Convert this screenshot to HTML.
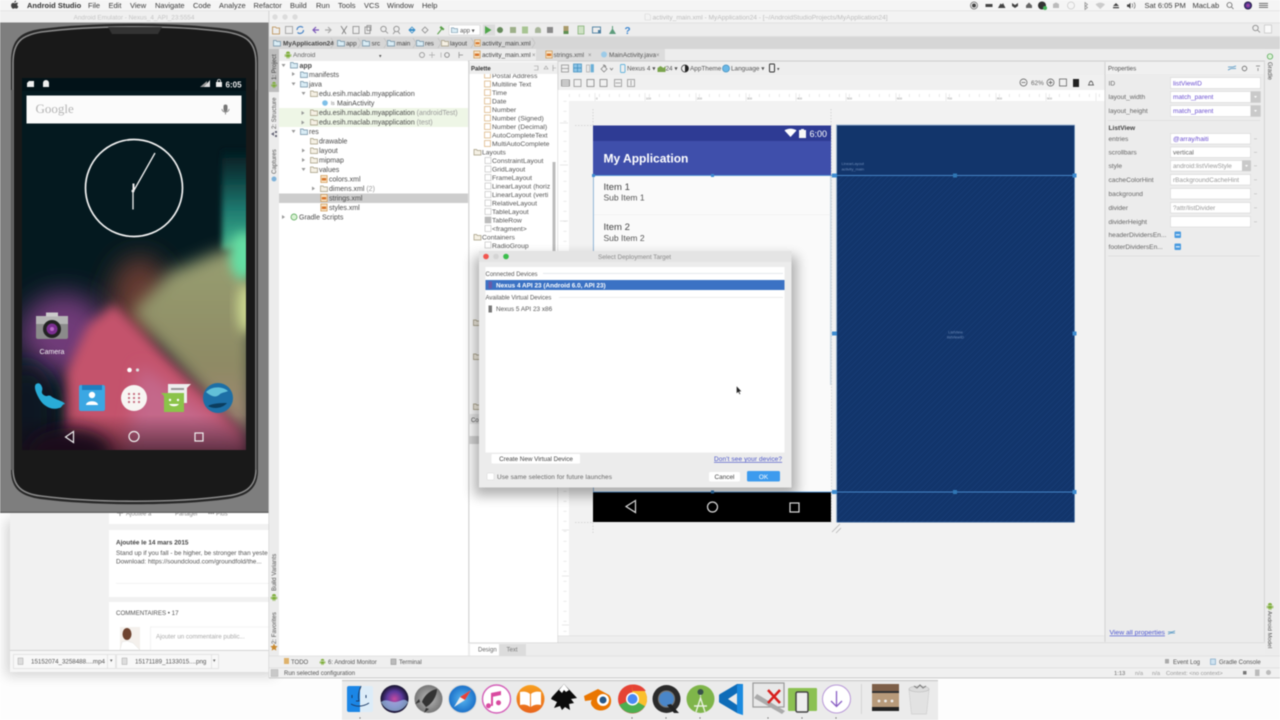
<!DOCTYPE html>
<html><head><meta charset="utf-8"><title>Android Studio</title>
<style>
html,body{margin:0;padding:0;width:1280px;height:720px;overflow:hidden;background:#fff}
svg{display:block;position:absolute;left:0;top:0;filter:blur(.4px)}
text{font-family:"Liberation Sans",sans-serif;font-size:7px;fill:#444}
.t{font-size:7px;fill:#4a4a4a}
.m{font-size:7.5px;fill:#3a3a3a}
.p{font-size:6.8px;fill:#555}
.l{font-size:6.6px;fill:#666}
.v{font-size:6.6px;fill:#6a4fd0}
.g{font-size:6.4px;fill:#999}
.r{font-size:6px;fill:#666}
.u{font-size:3px;fill:#888}
</style></head><body>
<svg width="1280" height="720" viewBox="0 0 1280 720" xmlns="http://www.w3.org/2000/svg">
<defs>
<symbol id="f" viewBox="0 0 8 7" overflow="visible"><path d="M.5 1h2.6l.7 1h3.7v4.5H.5z" fill="#f5f0e4" stroke="#a39a80" stroke-width=".7"/></symbol>
<symbol id="fb" viewBox="0 0 8 7" overflow="visible"><path d="M.5 1h2.6l.7 1h3.7v4.5H.5z" fill="#d9ecf5" stroke="#6f8ea3" stroke-width=".7"/></symbol>
<symbol id="x" viewBox="0 0 8 8" overflow="visible"><rect x=".8" y=".5" width="6.4" height="7" fill="#f6e3c6" stroke="#c98a3c" stroke-width=".6"/><rect x="1.8" y="3" width="4.4" height="2.5" fill="#d9762a"/></symbol>
<symbol id="b" viewBox="0 0 8 8" overflow="visible"><rect x=".6" y=".6" width="6.8" height="6.8" fill="#fff" stroke="#d3a465" stroke-width=".7"/></symbol>
<symbol id="a" viewBox="0 0 8 8" overflow="visible"><path d="M2 3a2 2 0 0 1 4 0v.2H2zM2 3.8h4v2.7H2zM.8 3.8h.8v2.4H.8zM6.4 3.8h.8v2.4h-.8zM2.8 6.5h.8V8h-.8zM4.4 6.5h.8V8h-.8z" fill="#7fae3c"/></symbol>
<pattern id="hatch" width="4" height="4" patternUnits="userSpaceOnUse" patternTransform="rotate(45)"><rect width="4" height="4" fill="#12356b"/><rect width="1" height="4" fill="#163b73"/></pattern>
<linearGradient id="teal" x1="0" y1="0" x2="0" y2="1"><stop offset="0" stop-color="#04191f"/><stop offset=".25" stop-color="#0c3d3e"/><stop offset=".6" stop-color="#1f7a70"/><stop offset="1" stop-color="#3fb58e"/></linearGradient>
<linearGradient id="olive" x1="0" y1="0" x2="0" y2="1"><stop offset="0" stop-color="#98a072"/><stop offset=".6" stop-color="#8e8a64"/><stop offset="1" stop-color="#a8867a"/></linearGradient>
<linearGradient id="vig" x1="0" y1="0" x2="0" y2="1"><stop offset="0" stop-color="#1a0a14" stop-opacity="0"/><stop offset="1" stop-color="#1a0a14" stop-opacity=".6"/></linearGradient>
<linearGradient id="dockfinder" x1="0" y1="0" x2="1" y2="0"><stop offset=".5" stop-color="#1b86e6"/><stop offset=".5" stop-color="#dcecf8"/></linearGradient>
<radialGradient id="siri"><stop offset="0" stop-color="#c64aa0"/><stop offset=".55" stop-color="#5a3a9c"/><stop offset="1" stop-color="#14122a"/></radialGradient>
<radialGradient id="gray"><stop offset="0" stop-color="#bbb"/><stop offset="1" stop-color="#777"/></radialGradient>
<radialGradient id="safari"><stop offset="0" stop-color="#58b6f0"/><stop offset="1" stop-color="#1a6fc8"/></radialGradient>
<linearGradient id="orange" x1="0" y1="0" x2="0" y2="1"><stop offset="0" stop-color="#f8a020"/><stop offset="1" stop-color="#e8641c"/></linearGradient>
<filter id="b12" x="-80%" y="-80%" width="260%" height="260%"><feGaussianBlur stdDeviation="13"/></filter>
<filter id="b8" x="-50%" y="-50%" width="200%" height="200%"><feGaussianBlur stdDeviation="8"/></filter>
<filter id="b5" x="-40%" y="-40%" width="180%" height="180%"><feGaussianBlur stdDeviation="5.5"/></filter>
<filter id="b4" x="-40%" y="-40%" width="180%" height="180%"><feGaussianBlur stdDeviation="4"/></filter>
<filter id="b2" x="-30%" y="-30%" width="160%" height="160%"><feGaussianBlur stdDeviation="3"/></filter>
<filter id="sh" x="-10%" y="-10%" width="120%" height="125%"><feGaussianBlur stdDeviation="6"/></filter>
<clipPath id="scr"><rect x="22" y="78" width="224" height="372"/></clipPath>
<clipPath id="pal"><rect x="469" y="74" width="88" height="570"/></clipPath>
</defs>

<!-- desktop -->
<rect width="1280" height="720" fill="#fdfdfd"/>

<!-- browser behind -->
<rect x="6" y="520" width="270" height="156" fill="#000" opacity=".16" filter="url(#sh)"/>
<rect x="10" y="505" width="262" height="167" fill="#f1f1f1"/>
<rect x="109" y="505" width="162" height="19" fill="#fff"/>
<rect x="109" y="530" width="162" height="67" fill="#fff"/>
<rect x="109" y="602" width="162" height="50" fill="#fff"/>
<rect x="116" y="583" width="155" height=".7" fill="#eee"/>
<path d="M120 510v6M117 513h6" stroke="#999" stroke-width="1"/>
<text x="126" y="515.5" style="font-size:6px;fill:#888">Ajoutée à</text>
<text x="175" y="515.5" style="font-size:6px;fill:#888">Partager</text>
<text x="208" y="515.5" style="font-size:6px;fill:#888">••• Plus</text>
<text x="116" y="544.5" style="font-size:6.4px;fill:#444;font-weight:bold">Ajoutée le 14 mars 2015</text>
<text x="116" y="555" style="font-size:6.4px;fill:#555">Stand up if you fall - be higher, be stronger than yeste</text>
<text x="116" y="563.5" style="font-size:6.4px;fill:#555">Download: https://soundcloud.com/groundfold/the...</text>
<text x="116" y="615" style="font-size:6.2px;fill:#555">COMMENTAIRES • 17</text>
<rect x="120" y="627" width="20" height="23" fill="#f4f0ec"/>
<ellipse cx="127" cy="634" rx="4.5" ry="6" fill="#6e4330"/>
<path d="M120 650l2-8 5-1 6 2 7 7z" fill="#fff" stroke="#ddd" stroke-width=".4"/>
<rect x="150.500" y="627" width="121" height="24" fill="#fff" stroke="#eee" stroke-width=".7"/>
<text x="156" y="638.500" style="font-size:6.2px;fill:#aaa">Ajouter un commentaire public...</text>
<rect x="10" y="650" width="260" height="22" fill="#f6f6f6"/>
<rect x="10" y="650" width="260" height=".8" fill="#ccc"/>
<rect x="13.500" y="654.500" width="102" height="14" fill="#f8f8f8" stroke="#ddd" stroke-width=".7"/>
<rect x="116.500" y="654.500" width="102" height="14" fill="#f8f8f8" stroke="#ddd" stroke-width=".7"/>
<rect x="18" y="658" width="5" height="6.500" fill="#ddd" stroke="#999" stroke-width=".4"/>
<rect x="122" y="658" width="5" height="6.500" fill="#ddd" stroke="#999" stroke-width=".4"/>
<text x="31" y="663.500" style="font-size:6.2px;fill:#555">15152074_3258488....mp4</text>
<text x="135" y="663.500" style="font-size:6.2px;fill:#555">15171189_1133015....png</text>
<path d="M107.500 654.500v14M211.500 654.500v14" stroke="#ddd" stroke-width=".7"/>
<text x="110" y="662" style="font-size:5px;fill:#666">▾</text><text x="213" y="662" style="font-size:5px;fill:#666">▾</text>

<!-- menu bar -->
<rect width="1280" height="11" fill="#f5f5f5"/>
<rect y="10.500" width="1280" height=".8" fill="#d8d8d8"/>
<path d="M17 3.200c-1-.1-1.500.6-2 .6s-1-.6-1.900-.5c-1.300.1-2.100 1.300-2 2.800.1 1.300 1.100 3 2 3 .6 0 .9-.4 1.700-.4s1.200.4 1.800.3c.8-.1 1.400-1.100 1.700-2.100-1.500-.8-1.400-2.800.0-3.500M15.200 2.900c.6-.6.900-1.300.8-2-.8.1-1.600.8-1.800 2z" fill="#444" transform="translate(0,-.4)"/>
<text x="27" y="8" class="m" style="font-weight:bold;fill:#333">Android Studio</text>
<text x="88" y="8" class="m">File</text><text x="108.500" y="8" class="m">Edit</text><text x="130" y="8" class="m">View</text><text x="155" y="8" class="m">Navigate</text><text x="193" y="8" class="m">Code</text><text x="219" y="8" class="m">Analyze</text><text x="253.500" y="8" class="m">Refactor</text><text x="290" y="8" class="m">Build</text><text x="316" y="8" class="m">Run</text><text x="338" y="8" class="m">Tools</text><text x="364" y="8" class="m">VCS</text><text x="387" y="8" class="m">Window</text><text x="422" y="8" class="m">Help</text>
<g fill="#444">
<circle cx="974" cy="5.500" r="3.500" fill="none" stroke="#666" stroke-width=".8"/><circle cx="974" cy="5.500" r="2"/>
<rect x="985.500" y="4" width="7" height="3"/>
<path d="M998 8l2.500-4.500 1.500 1 1-1.500 2.500 5z"/>
<path d="M1012 3l3 2 3-2 0 3-3 2-3-2z"/>
<path d="M1026 8v-2.500l3-3 3 3v2.500z" fill="#666"/>
<circle cx="1042" cy="5.500" r="4" fill="#333"/><circle cx="1045" cy="8" r="2" fill="#45b35a"/>
<path d="M1053 8v-4l3-1.500 3 1.500v4z" fill="#bbb"/>
<circle cx="1071" cy="5.500" r="3.500" fill="none" stroke="#ccc" stroke-width=".8"/>
<path d="M1085 2.500l2.500 2-2 1.500 2 1.500-2.500 2z" fill="none" stroke="#888" stroke-width=".7"/>
<path d="M1095.500 4.500c3-2.500 6.500-2.500 9.500 0l-4.700 4.500z" fill="#ccc"/>
<path d="M1113 6l3-3 3 3zM1113 7h6v1.200h-6z"/>
<path d="M1127 4.500h1.500l2-1.800v6l-2-1.800h-1.500z"/><path d="M1132 3.500c1 1 1 3 0 4M1134 2.500c1.500 1.500 1.500 4.500 0 6" fill="none" stroke="#555" stroke-width=".6"/>
<circle cx="1229.500" cy="5" r="2.500" fill="none" stroke="#666" stroke-width=".8"/><path d="M1231.500 7l2 2" stroke="#666" stroke-width=".8"/>
<circle cx="1248" cy="5.500" r="4" fill="url(#siri)"/>
<path d="M1259 3h9v.8h-9zM1259 5h9v.8h-9zM1259 7h9v.8h-9z"/>
</g>
<text x="1144.500" y="8" class="m">Sat 6:05 PM</text><text x="1192.500" y="8" class="m">MacLab</text>

<!-- emulator -->
<rect y="11" width="269" height="11.500" fill="#f0f0f0"/>
<text x="134" y="19.500" text-anchor="middle" style="font-size:6.4px;fill:#c4c4c4">Android Emulator - Nexus_4_API_23:5554</text>
<rect y="22.500" width="269" height="490.500" fill="#7e7e7e"/>
<rect x="0" y="511.500" width="269" height="1.500" fill="#666"/>
<!-- phone -->
<path d="M11 62C11 38 22 32 40 29 95 22 175 22 228 29 246 32 258 38 258 62V470C258 490 246 496 228 499 175 506 95 506 40 499 22 496 11 490 11 470Z" fill="#262626"/>
<path d="M13 63C13 40 24 35 41 32 95 25 175 25 227 32 244 35 256 40 256 63V469C256 488 244 494 227 496 175 503 95 503 41 496 24 494 13 488 13 469Z" fill="#191919" stroke="#8a8a8a" stroke-width="1.600"/>
<path d="M12 470v-380" stroke="#5a5a5a" stroke-width="2"/><path d="M257 470v-380" stroke="#3a3a3a" stroke-width="1.500"/>
<path d="M108 27h54l-4 7h-46z" fill="#333"/>
<!-- screen -->
<g clip-path="url(#scr)">
<rect x="22" y="78" width="224" height="372" fill="#04191f"/>
<rect x="222" y="150" width="40" height="100" fill="url(#teal)" filter="url(#b2)"/>
<ellipse cx="140" cy="300" rx="30" ry="44" fill="#663a32" filter="url(#b12)"/>
<path d="M132 312L170 272 218 252 252 244V445L232 425 155 340Z" fill="url(#olive)" filter="url(#b8)"/>
<ellipse cx="243" cy="256" rx="13" ry="24" fill="#64e0a4" filter="url(#b5)"/>
<ellipse cx="246" cy="308" rx="9" ry="26" fill="#cdd990" filter="url(#b5)"/>
<ellipse cx="64" cy="335" rx="44" ry="42" fill="#6f3a78" filter="url(#b12)"/>
<path d="M114 304L240 430 246 462H62L66 372 88 325Z" fill="#c4526c" filter="url(#b5)"/>
<path d="M140 365L246 440V460H125Z" fill="#c4688a" filter="url(#b8)"/>
<ellipse cx="26" cy="415" rx="30" ry="52" fill="#0a1620" filter="url(#b12)"/>
<ellipse cx="70" cy="452" rx="42" ry="24" fill="#1e0f20" filter="url(#b8)"/>
<rect x="22" y="415" width="224" height="37" fill="url(#vig)"/>
<rect x="22" y="78" width="224" height="13" fill="#021015" opacity=".7"/>
</g>
<path d="M29 81h5v6h-7v-4z" fill="#eee"/><path d="M43 83a3 3 0 0 1 6 0v4h-6z" fill="#eee"/>
<path d="M200 87l7-6v6z" fill="#999"/><path d="M204 87l6-7v7z" fill="#ddd"/><rect x="216" y="82" width="6" height="5" fill="#eee"/><path d="M217.500 82v-1a1.500 1.500 0 0 1 3 0v1" fill="none" stroke="#eee" stroke-width=".8"/>
<text x="225.500" y="87.500" style="font-size:8px;fill:#eee;font-weight:bold">6:05</text>
<rect x="26.500" y="95.500" width="215" height="28" fill="#fbfbfb"/>
<text x="35.500" y="113" style="font-family:'Liberation Serif',serif;font-size:13px;fill:#b5b5b5">Google</text>
<rect x="223.500" y="104.500" width="4" height="7" rx="2" fill="#777"/><path d="M222 109c0 4 7 4 7 0M225.500 112v2.500" fill="none" stroke="#777" stroke-width=".8"/>
<circle cx="134" cy="188" r="48.500" fill="none" stroke="#f2f2f2" stroke-width="1.700"/>
<path d="M133 192L155 153M133 192L133 209.500" stroke="#f2f2f2" stroke-width="1.300" fill="none"/><circle cx="133" cy="191" r="1.500" fill="#eee"/><rect x="132.500" y="183.500" width="2" height="8" fill="#eee"/>
<!-- camera -->
<rect x="36" y="316" width="32" height="23" rx="2" fill="#8b8b8b"/><rect x="36" y="316" width="32" height="8" fill="#b5b5b5"/><rect x="46" y="312.500" width="12" height="4" fill="#ccc"/>
<circle cx="52" cy="329" r="9" fill="#222"/><circle cx="52" cy="329" r="5.500" fill="#7a2e8f"/><circle cx="52" cy="329" r="2" fill="#b769c6"/>
<text x="52" y="354" text-anchor="middle" style="font-size:7px;fill:#f3f3f3">Camera</text>
<circle cx="129.500" cy="370" r="2.300" fill="#fff"/><circle cx="137.500" cy="370" r="1.600" fill="#ddd"/>
<!-- dock android -->
<path d="M37 384c3-2 5 0 6 3 1 3-.5 4 0 6 1 2 3 3 5 3 1.500-.5 3-1 5 1 3 2 13 5 13 7-3 0-3 4-6 4-8 3-16-3-19-8-3-5-7-13-4-16z" fill="#29abd6" transform="translate(-1 0)"/>
<rect x="79" y="385" width="26" height="26" rx="2" fill="#3ba7e3"/><rect x="82" y="385" width="20" height="5" fill="#1f7fc0"/><circle cx="92" cy="395" r="3.200" fill="#fff"/><path d="M86 405c0-5 12-5 12 0z" fill="#fff"/>
<circle cx="134" cy="398" r="13" fill="#f7f5f3"/><g fill="#c76b7e"><circle cx="129" cy="394" r="1.100"/><circle cx="134" cy="394" r="1.100"/><circle cx="139" cy="394" r="1.100"/><circle cx="129" cy="398" r="1.100"/><circle cx="134" cy="398" r="1.100"/><circle cx="139" cy="398" r="1.100"/><circle cx="129" cy="402" r="1.100"/><circle cx="134" cy="402" r="1.100"/><circle cx="139" cy="402" r="1.100"/></g>
<path d="M168 384h23l-4 4v15h-19z" fill="#eee"/><rect x="171" y="388" width="13" height="2" fill="#999"/>
<path d="M161 393h23v19h-20v-16z" fill="#8bc34a"/><circle cx="170" cy="400" r="1.200" fill="#fff"/><circle cx="178" cy="400" r="1.200" fill="#fff"/><path d="M169 404c2 3 8 3 10 0z" fill="#fff"/>
<circle cx="218" cy="398" r="15" fill="#1d6fa6"/><path d="M206 392c6-6 16-6 22-1-4 2-6 1-9 4-4 3-8 1-13-3z" fill="#62c0d8"/><path d="M208 406c5 3 14 3 19-3-4 0-14 0-19 3z" fill="#0b3d5e"/>
<path d="M73.500 431.500l-8 5.500 8 5.500z" fill="none" stroke="#eee" stroke-width="1.200"/>
<circle cx="134" cy="436.500" r="5" fill="none" stroke="#eee" stroke-width="1.200"/>
<rect x="195" y="433" width="8" height="8" fill="none" stroke="#eee" stroke-width="1.200"/>

<!-- studio window -->
<rect x="269" y="11" width="1011" height="667" fill="#ededed"/>
<rect x="269" y="11" width="1011" height="12" fill="#f3f3f3"/>
<rect x="268.500" y="11" width=".8" height="667" fill="#ccc"/>
<rect x="269" y="22.500" width="1011" height=".8" fill="#dcdcdc"/>
<circle cx="275" cy="17" r="2.700" fill="#dcdcdc"/><circle cx="285" cy="17" r="2.700" fill="#dcdcdc"/><circle cx="295" cy="17" r="2.700" fill="#dcdcdc"/>
<path d="M645 14h4l1.500 1.500v4.500H645z" fill="none" stroke="#d8d8d8" stroke-width=".6"/>
<text x="652.500" y="19.500" style="font-size:6.6px;fill:#bdbdbd">activity_main.xml - MyApplication24 - [~/AndroidStudioProjects/MyApplication24]</text>
<!-- toolbar -->
<g fill="none" stroke="#8a8a8a" stroke-width=".8">
<path d="M272.500 27h3l1 1h3v6h-7z" stroke="#b88a4c"/>
<rect x="285.500" y="26.500" width="7" height="7" stroke="#999"/>
<path d="M297 30a3.500 3.500 0 0 1 6-2.400M303.500 30a3.500 3.500 0 0 1-6 2.400" stroke="#4c86c6" stroke-width="1.200"/>
<path d="M313 30h6M316 27l3 3-3 3" stroke="#7a56b8" stroke-width="1.200" transform="rotate(180 316 30)"/>
<path d="M325 30h6M328 27l3 3-3 3" stroke="#aaa" stroke-width="1.200"/>
<path d="M341 26l5 8M347 26l-5 8" stroke="#777"/><rect x="353" y="26.500" width="6" height="7"/><rect x="365" y="27" width="5" height="6.500"/><rect x="367" y="25.500" width="4" height="5"/>
<circle cx="383.500" cy="29" r="2.700"/><path d="M385.500 31l2.500 2.500"/><circle cx="396.500" cy="29" r="2.700"/><path d="M393 34l2-2.500M400 34l-2-2.500"/>
<path d="M409 30h6" stroke="#3a8fc9" stroke-width="2"/><path d="M412 27l3 3-3 3-3-3z" stroke="#3a8fc9"/>
<path d="M425 27l3 3-3 3-3-3z" stroke="#8a8a8a"/>
</g>
<path d="M437 34l4-5-1.500-1.500 1.500-1.500 3.500 3-1.500 1.500-1-1-4 5z" fill="#5aa04a"/>
<rect x="449" y="25" width="31" height="10" rx="1" fill="#fff" stroke="#ccc" stroke-width=".6"/>
<use href="#fb" x="451" y="26.500" width="7" height="7"/>
<text x="460" y="32.500" style="font-size:6px;fill:#555">app ▾</text>
<rect x="483" y="24.500" width="12" height="11" fill="#dbdbdb"/>
<path d="M485 26l6.500 4-6.500 4z" fill="#4fa64a"/>
<g>
<circle cx="500" cy="30" r="3" fill="#668a5c"/><rect x="510" y="27" width="6" height="6" fill="#9db089"/><rect x="522" y="26.500" width="6" height="7" fill="#a8c593"/><path d="M535 30a3 3 0 1 1 6 0v3h-6z" fill="#a8b59a"/><rect x="547" y="27" width="6" height="6" fill="#8a8a8a"/>
<rect x="563.500" y="26" width="5" height="8" fill="#a99a6a"/><rect x="563.500" y="31" width="5" height="3" fill="#5e8f52"/>
<rect x="578" y="26" width="6" height="8" fill="#cfe2c4" stroke="#6ba05c" stroke-width=".6"/>
<rect x="592.500" y="27" width="8" height="6" fill="none" stroke="#4c7ea0" stroke-width=".9"/><rect x="598" y="30" width="3" height="3.500" fill="#4c7ea0"/>
<path d="M609 34h7l-3-5v-3h-1v3z" fill="#5d9c7c"/>
</g>
<text x="624.500" y="34" style="font-size:10px;fill:#3c86d0;font-weight:bold">?</text>
<circle cx="1255.500" cy="28" r="2.700" fill="none" stroke="#888" stroke-width=".8"/><path d="M1257.500 30l2.500 2.500" stroke="#888" stroke-width=".8"/>
<rect x="1264.500" y="25" width="7" height="8" fill="#fafafa" stroke="#bbb" stroke-width=".6"/>
<rect x="269" y="36" width="1011" height=".8" fill="#dcdcdc"/>
<!-- breadcrumb -->
<rect x="269" y="37" width="1011" height="12" fill="#d6d6d6"/>
<use href="#fb" x="273" y="39.500" width="8" height="7"/><text x="283" y="45.500" style="font-size:6.400px;fill:#444;font-weight:bold">MyApplication24</text>
<path d="M331 38l3 5-3 5" fill="none" stroke="#bbb" stroke-width=".6"/>
<use href="#fb" x="337" y="39.500" width="8" height="7"/><text x="346" y="45.500" style="font-size:6.400px;fill:#444">app</text>
<use href="#fb" x="362" y="39.500" width="8" height="7"/><text x="371.500" y="45.500" style="font-size:6.400px;fill:#444">src</text>
<use href="#fb" x="387" y="39.500" width="8" height="7"/><text x="396.500" y="45.500" style="font-size:6.400px;fill:#444">main</text>
<use href="#fb" x="416" y="39.500" width="8" height="7"/><text x="425" y="45.500" style="font-size:6.400px;fill:#444">res</text>
<use href="#f" x="441" y="39.500" width="8" height="7"/><text x="450" y="45.500" style="font-size:6.400px;fill:#444">layout</text>
<use href="#x" x="474" y="39.500" width="7" height="7"/><text x="482" y="45.500" style="font-size:6.400px;fill:#444">activity_main.xml</text>
<path d="M532 38l3 5-3 5" fill="none" stroke="#bbb" stroke-width=".6"/>
<g fill="none" stroke="#bbb" stroke-width=".6"><path d="M358 38l3 5-3 5M384 38l3 5-3 5M413 38l3 5-3 5M438 38l3 5-3 5M471 38l3 5-3 5"/></g>
<!-- project header -->
<rect x="279" y="49" width="189" height="12" fill="#ececec"/>
<use href="#a" x="284" y="50.500" width="8" height="8"/>
<text x="293" y="57" style="font-size:6.500px;fill:#666">Android</text>
<text x="379" y="57.500" style="font-size:5px;fill:#555">▾</text>
<g fill="none" stroke="#888" stroke-width=".7"><circle cx="422" cy="55" r="2.500"/><path d="M429 55h6M432 52v6M441 52.500v5" stroke="#aaa"/><circle cx="447" cy="55" r="2.300" stroke="#666"/><path d="M459 52v6M459 55h4"/></g>
<!-- left strip -->
<rect x="269" y="49" width="10" height="629" fill="#ececec"/>
<rect x="269" y="49" width="10" height="43" fill="#bdbdbd"/>
<g>
<text transform="translate(276,80) rotate(-90)" style="font-size:6.100px;fill:#444">1: Project</text>
<text transform="translate(276,129) rotate(-90)" style="font-size:6.100px;fill:#555">2: Structure</text>
<text transform="translate(276,174) rotate(-90)" style="font-size:6.100px;fill:#555">Captures</text>
<text transform="translate(276,591) rotate(-90)" style="font-size:6.100px;fill:#555">Build Variants</text>
<text transform="translate(276,644) rotate(-90)" style="font-size:6.100px;fill:#555">2: Favorites</text>
</g>
<use href="#a" x="270.500" y="81" width="7" height="7"/>
<path d="M271 134l3-2v4zM275 131h2v2h-2zM275 135h2v2h-2z" fill="#667"/>
<circle cx="274" cy="179" r="2.500" fill="#7fb2d9"/>
<use href="#a" x="270" y="593" width="8" height="8"/>
<path d="M274 643.500l1.100 2.400 2.600.3-1.900 1.800.5 2.600-2.300-1.300-2.300 1.300.5-2.600-1.900-1.800 2.600-.3z" fill="#c98a30"/>
<!-- tree pane -->
<rect x="279" y="61" width="189" height="595" fill="#fff"/>
<rect x="279" y="108" width="189" height="19" fill="#eef6e6"/>
<rect x="279" y="193.500" width="189" height="9.500" fill="#cdcdcd"/>
<g fill="#999">
<path d="M281.500 64l4 0-2 3z"/><path d="M292 72l3 2-3 2z"/><path d="M291.500 82.500l4 0-2 3z"/><path d="M301.500 92l4 0-2 3z"/><path d="M301.500 111l3 2-3 2z"/><path d="M301.500 120.500l3 2-3 2z"/><path d="M291.500 130l4 0-2 3z"/><path d="M302 148.500l3 2-3 2z"/><path d="M302 158l3 2-3 2z"/><path d="M301.500 168l4 0-2 3z"/><path d="M312 186.500l3 2-3 2z"/><path d="M282 215l3 2-3 2z"/>
</g>
<use href="#fb" x="290" y="61.500" width="8" height="7"/>
<use href="#fb" x="300" y="71" width="8" height="7"/><use href="#fb" x="300" y="80.500" width="8" height="7"/>
<use href="#f" x="310" y="90" width="8" height="7"/><use href="#f" x="310" y="109" width="8" height="7"/><use href="#f" x="310" y="118.500" width="8" height="7"/><use href="#fb" x="300" y="128" width="8" height="7"/>
<use href="#f" x="310" y="137.500" width="8" height="7"/><use href="#f" x="310" y="147" width="8" height="7"/><use href="#f" x="310" y="156.500" width="8" height="7"/><use href="#f" x="310" y="166" width="8" height="7"/>
<use href="#x" x="320" y="175" width="8" height="8"/><use href="#f" x="320" y="185" width="8" height="7"/><use href="#x" x="320" y="194" width="8" height="8"/><use href="#x" x="320" y="203.500" width="8" height="8"/>
<circle cx="294" cy="217" r="3" fill="#d9f2d4" stroke="#4aa04a" stroke-width=".7"/>
<circle cx="325" cy="103" r="2.800" fill="#7fc0e8"/><text x="331" y="105" style="font-size:5px;fill:#777">ls</text>
<text x="299.500" y="68" class="t" style="font-weight:bold">app</text>
<text x="309" y="77" class="t">manifests</text>
<text x="309" y="86.500" class="t">java</text>
<text x="319" y="96" class="t">edu.esih.maclab.myapplication</text>
<text x="337" y="105.500" class="t">MainActivity</text>
<text x="319" y="115" class="t">edu.esih.maclab.myapplication <tspan fill="#999">(androidTest)</tspan></text>
<text x="319" y="124.500" class="t">edu.esih.maclab.myapplication <tspan fill="#999">(test)</tspan></text>
<text x="309" y="134" class="t">res</text>
<text x="319" y="143.500" class="t">drawable</text>
<text x="319" y="153" class="t">layout</text>
<text x="319" y="162.500" class="t">mipmap</text>
<text x="319" y="172" class="t">values</text>
<text x="329" y="181.500" class="t">colors.xml</text>
<text x="329" y="191" class="t">dimens.xml <tspan fill="#999">(2)</tspan></text>
<text x="329" y="200.500" class="t">strings.xml</text>
<text x="329" y="210" class="t">styles.xml</text>
<text x="299" y="219.500" class="t">Gradle Scripts</text>

<!-- editor tabs -->
<rect x="468" y="49" width="812" height="12" fill="#ededed"/>
<rect x="468" y="49" width="197" height="12" fill="#dcdcdc"/>
<rect x="468" y="49" width="68" height="12" fill="#ececec"/>
<rect x="468" y="60.500" width="797" height="1.100" fill="#cfcfcf"/>
<use href="#x" x="473" y="50.500" width="8" height="8"/><text x="482" y="57" style="font-size:6.400px;fill:#444">activity_main.xml</text><text x="532" y="57" style="font-size:6px;fill:#888">×</text>
<use href="#x" x="545" y="50.500" width="8" height="8"/><text x="553.500" y="57" style="font-size:6.400px;fill:#555">strings.xml</text><text x="588" y="57" style="font-size:6px;fill:#888">×</text>
<circle cx="604" cy="54.500" r="3" fill="#9ccbe8"/><text x="609" y="57" style="font-size:6.400px;fill:#555">MainActivity.java</text><text x="656" y="57" style="font-size:6px;fill:#888">×</text>

<!-- palette -->
<rect x="468.500" y="61" width="89" height="583" fill="#fff"/>
<rect x="468.500" y="62" width="89" height="12" fill="#eeeeee"/>
<rect x="468.500" y="61" width=".8" height="583" fill="#c8c8c8"/>
<text x="471" y="70.500" style="font-size:6px;fill:#333;font-weight:bold">Palette</text>
<path d="M534 66h4v4h-4M544 69l2-3 2 3zM553 65v6M553 68h3" fill="none" stroke="#999" stroke-width=".6"/>
<g clip-path="url(#pal)">
<use href="#b" x="484" y="71.500" width="7" height="7"/><text x="492" y="78" class="p">Postal Address</text>
<use href="#b" x="484" y="80.500" width="7" height="7"/><text x="492" y="86.500" class="p">Multiline Text</text>
<use href="#b" x="484" y="89" width="7" height="7"/><text x="492" y="95" class="p">Time</text>
<use href="#b" x="484" y="97.500" width="7" height="7"/><text x="492" y="103.500" class="p">Date</text>
<use href="#b" x="484" y="106" width="7" height="7"/><text x="492" y="112" class="p">Number</text>
<use href="#b" x="484" y="114.500" width="7" height="7"/><text x="492" y="120.500" class="p">Number (Signed)</text>
<use href="#b" x="484" y="123" width="7" height="7"/><text x="492" y="129" class="p">Number (Decimal)</text>
<use href="#b" x="484" y="131.500" width="7" height="7"/><text x="492" y="137.500" class="p">AutoCompleteText</text>
<use href="#b" x="484" y="140" width="7" height="7"/><text x="492" y="146" class="p">MultiAutoComplete</text>
<use href="#f" x="473.500" y="148.500" width="8" height="7"/><text x="482" y="154.500" class="p">Layouts</text>
<g fill="#fff" stroke="#bbb" stroke-width=".6"><rect x="485" y="157.500" width="6" height="6"/><rect x="485" y="166" width="6" height="6"/><rect x="485" y="174.500" width="6" height="6"/><rect x="485" y="183" width="6" height="6"/><rect x="485" y="191.500" width="6" height="6"/><rect x="485" y="200" width="6" height="6"/><rect x="485" y="208.500" width="6" height="6"/><rect x="485" y="217" width="6" height="6" fill="#bbb"/><rect x="485" y="225.500" width="6" height="6"/><rect x="485" y="242" width="6" height="6"/></g>
<text x="492" y="163" class="p">ConstraintLayout</text>
<text x="492" y="171.500" class="p">GridLayout</text>
<text x="492" y="180" class="p">FrameLayout</text>
<text x="492" y="188.500" class="p">LinearLayout (horiz</text>
<text x="492" y="197" class="p">LinearLayout (verti</text>
<text x="492" y="205.500" class="p">RelativeLayout</text>
<text x="492" y="214" class="p">TableLayout</text>
<text x="492" y="222.500" class="p">TableRow</text>
<text x="492" y="231" class="p">&lt;fragment&gt;</text>
<use href="#f" x="473.500" y="233.500" width="8" height="7"/><text x="482" y="239.500" class="p">Containers</text>
<text x="492" y="248" class="p">RadioGroup</text>
</g>
<rect x="552.500" y="162" width="3" height="120" fill="#bcbcbc"/>
<use href="#f" x="473" y="319" width="8" height="7"/><use href="#f" x="473" y="353" width="8" height="7"/><use href="#f" x="473" y="403" width="8" height="7"/>
<rect x="469" y="414" width="12" height="10" fill="#eaeaea"/><text x="471" y="422" style="font-size:6px;fill:#555">Co</text>
<rect x="469" y="436" width="12" height="8" fill="#d8d8d8"/>

<!-- design area -->
<rect x="558" y="62" width="547" height="13" fill="#eeeeee"/>
<rect x="558" y="75" width="547" height="15" fill="#f0f0f0"/>
<rect x="557.500" y="61" width=".8" height="583" fill="#cfcfcf"/>
<rect x="558" y="90" width="547" height="11" fill="#fff"/>
<rect x="558" y="90" width="11" height="546" fill="#fff"/>
<rect x="569" y="101" width="536" height="535" fill="#f2f2f2"/>
<rect x="558" y="636" width="547" height="6" fill="#eeeeee"/>
<rect x="558" y="635.500" width="547" height=".6" fill="#dedede"/>
<rect x="468" y="642.500" width="812" height="1" fill="#cfcfcf"/>
<g fill="none" stroke="#888" stroke-width=".7">
<rect x="561.500" y="65" width="7" height="7"/><path d="M561.500 68.500h7"/>
<rect x="573.500" y="64" width="8" height="8" fill="#8cc4e6" stroke="#3f8dbd"/><path d="M577.500 64v8M573.500 68h8" stroke="#3f8dbd"/>
<rect x="586.500" y="65" width="3" height="7" stroke="#aaa"/><rect x="591" y="64.500" width="2.500" height="7.500" fill="#6ab0d8" stroke="#6ab0d8"/>
<path d="M601 69l3-3 3 3-3 3zM603 65a3 3 0 0 1 3 2" stroke="#777"/><path d="M610 68l1.500 2 1.500-2" stroke="#777"/>
<rect x="620.500" y="64.500" width="4.500" height="8" rx=".7" stroke="#3aa3d8"/>
<path d="M657.500 72v-4l3-2 3 2 2-2v6z" fill="#7aa44c" stroke="none"/>
<circle cx="685" cy="68.500" r="3.500" stroke="#222"/><path d="M685 65a3.500 3.500 0 0 1 0 7z" fill="#222" stroke="none"/>
<circle cx="726" cy="68.500" r="3.500" fill="#6bb8e6" stroke="#3f8dbd"/>
<rect x="769.500" y="64" width="5" height="8" rx=".7" stroke="#333" stroke-width="1"/>
<rect x="561.500" y="80" width="8" height="6" stroke="#777"/><path d="M561.500 82h8M561.500 84h8"/>
<rect x="574" y="79.500" width="7" height="7"/><rect x="587" y="79.500" width="7" height="7" stroke="#777"/><rect x="600" y="79.500" width="7" height="7" stroke="#777"/>
<rect x="614.500" y="79.500" width="7" height="7"/><path d="M615.500 83h5"/><rect x="627.500" y="79.500" width="7" height="7"/><path d="M631 80.500v5"/>
<circle cx="1023.500" cy="82.500" r="3.500" stroke="#555"/><path d="M1021.500 82.500h4" stroke="#555"/>
<circle cx="1050.500" cy="82.500" r="3.500" stroke="#555"/><path d="M1048.500 82.500h4M1050.500 80.500v4" stroke="#555"/>
<rect x="1059.500" y="79" width="7" height="7" stroke="#555"/>
<path d="M1088 85h6M1089 85c0-1 .0-3 2-4 2 1 2 3 2 4" stroke="#444"/>
</g>
<path d="M1073 79h6v8h-6z" fill="#222"/>
<text x="627" y="70.500" style="font-size:6.400px;fill:#555">Nexus 4 ▾</text>
<text x="665.500" y="70.500" style="font-size:6.400px;fill:#555">24 ▾</text>
<text x="690" y="70.500" style="font-size:6.400px;fill:#555">AppTheme</text>
<text x="731" y="70.500" style="font-size:6.400px;fill:#555">Language ▾</text>
<text x="777" y="70.500" style="font-size:5px;fill:#555">▾</text>
<text x="1031" y="85" style="font-size:6.400px;fill:#666">62%</text>
<path d="M569 95.500H1105" stroke="#d8d8d8" stroke-width="3" stroke-dasharray=".6 9.400" fill="none"/>
<path d="M595 93v8M645 93v8M696 93v8M746 93v8M796 93v8M846 93v8M896 93v8M946 93v8M996 93v8M1046 93v8M1096 93v8" stroke="#ddd" stroke-width=".6"/>
<text x="596" y="99.500" class="u">0</text><text x="646" y="99.500" class="u">100</text><text x="697" y="99.500" class="u">200</text><text x="747" y="99.500" class="u">300</text><text x="797" y="99.500" class="u">400</text><text x="847" y="99.500" class="u">500</text><text x="897" y="99.500" class="u">600</text><text x="947" y="99.500" class="u">700</text><text x="997" y="99.500" class="u">800</text><text x="1047" y="99.500" class="u">900</text>
<path d="M565 101V636" stroke="#dedede" stroke-width="3" stroke-dasharray=".6 9.400" fill="none"/>
<path d="M560 123h8M560 165h8M560 221h8M562 530h7M562 576h7M562 625h7" stroke="#cfcfcf" stroke-width=".6"/>
<!-- device -->
<rect x="593" y="125.500" width="238" height="397" fill="#fafafa"/>
<rect x="593" y="125.500" width="238" height="16" fill="#2e3b94"/>
<rect x="593" y="141" width="238" height="34.500" fill="#3f4fab"/>
<path d="M784.500 130.500c3.500-2.500 8.500-2.500 12 0l-6 6.500z" fill="#fff"/>
<rect x="799" y="130" width="7" height="8" fill="#f6f6f6"/>
<rect x="801" y="129" width="3" height="1" fill="#f6f6f6"/>
<text x="809.500" y="137" style="font-size:9px;fill:#fff">6:00</text>
<text x="603.500" y="162.500" style="font-size:12px;fill:#fff;font-weight:bold">My Application</text>
<text x="603.500" y="190" style="font-size:9.500px;fill:#444">Item 1</text>
<text x="603.500" y="200.500" style="font-size:8.500px;fill:#555">Sub Item 1</text>
<text x="603.500" y="230" style="font-size:9.500px;fill:#444">Item 2</text>
<text x="603.500" y="241" style="font-size:8.500px;fill:#555">Sub Item 2</text>
<rect x="593" y="214.500" width="238" height=".6" fill="#efefef"/>
<rect x="593" y="492" width="238" height="30" fill="#000"/>
<path d="M635.500 500.500l-9.500 6 9.500 6z" fill="none" stroke="#ddd" stroke-width="1.200"/>
<circle cx="712.500" cy="507" r="5" fill="none" stroke="#ddd" stroke-width="1.200"/>
<rect x="790" y="503" width="9" height="9" fill="none" stroke="#ddd" stroke-width="1.200"/>
<rect x="830" y="175" width="1.500" height="210" fill="#cdd9e3"/>
<path d="M593 125.500V108M831 125.500V108M593 522.500V533M575 522.500h18M575 125.500h18M831.500 125.500v397" stroke="#bbb" stroke-width=".5" stroke-dasharray="1.500 1.500" fill="none"/>
<path d="M832 532l8-8M836 533l5-5" stroke="#aaa" stroke-width=".6"/>
<rect x="593" y="175" width="482" height=".9" fill="#4a8dd0"/>
<rect x="593" y="491.600" width="482" height=".9" fill="#4a8dd0"/>
<rect x="593" y="175" width=".8" height="317" fill="#7aa6d0"/>
<!-- blueprint -->
<rect x="837" y="125.500" width="237.500" height="397" fill="#12356b"/>
<rect x="837" y="175.500" width="237.500" height="347" fill="url(#hatch)"/>
<rect x="837" y="175" width="238" height=".9" fill="#4a8dd0"/>
<rect x="837" y="491.600" width="238" height=".9" fill="#4a8dd0"/>
<rect x="836.500" y="125" width="238" height="397" fill="none" stroke="#4a7bb0" stroke-width=".5"/>
<text x="841.500" y="165" style="font-size:3.900px;fill:#6d8bb8">LinearLayout</text>
<text x="841.500" y="170.500" style="font-size:3.900px;fill:#6d8bb8">activity_main</text>
<text x="955.500" y="333.500" text-anchor="middle" style="font-size:3.900px;fill:#6d8bb8">ListView</text>
<text x="955.500" y="338.500" text-anchor="middle" style="font-size:3.900px;fill:#6d8bb8">listViewID</text>
<g fill="#3d8bd0">
<rect x="953" y="173.500" width="4" height="4" fill="#2f76b4"/><rect x="1072.500" y="173.500" width="4" height="4"/><rect x="1072.500" y="331.500" width="4" height="4"/><rect x="953" y="490" width="4" height="4" fill="#2f76b4"/><rect x="1072.500" y="490" width="4" height="4"/><rect x="832" y="331.500" width="5" height="4"/><rect x="832" y="173.500" width="5" height="4"/><rect x="832" y="490" width="5" height="4"/><rect x="711" y="174" width="3" height="3"/><rect x="711" y="490.500" width="3" height="3" fill="#2f76b4"/><rect x="592" y="174" width="3" height="3"/>
</g>

<!-- properties -->
<rect x="1105" y="62" width="160" height="580" fill="#ececec"/>
<rect x="1105" y="62" width="160" height="12" fill="#f0f0f0"/>
<rect x="1104.500" y="62" width=".9" height="580" fill="#cfcfcf"/>
<rect x="1264" y="62" width=".8" height="580" fill="#cfcfcf"/>
<text x="1108" y="70.500" style="font-size:6.200px;fill:#555">Properties</text>
<path d="M1228 70l3-1.500h5M1236 66l-3 1h-5" fill="none" stroke="#4a90c0" stroke-width=".8"/>
<circle cx="1244.500" cy="68.500" r="2.300" fill="none" stroke="#666" stroke-width=".8"/><path d="M1256 66h4M1258 68v3" stroke="#777" stroke-width=".7"/>
<text x="1108.500" y="85.500" class="l">ID</text><text x="1108.500" y="99" class="l">layout_width</text><text x="1108.500" y="113" class="l">layout_height</text>
<text x="1108.500" y="130" style="font-size:6.600px;fill:#444;font-weight:bold">ListView</text>
<text x="1108.500" y="141" class="l">entries</text><text x="1108.500" y="154.500" class="l">scrollbars</text><text x="1108.500" y="168" class="l">style</text><text x="1108.500" y="182" class="l">cacheColorHint</text><text x="1108.500" y="196" class="l">background</text><text x="1108.500" y="210" class="l">divider</text><text x="1108.500" y="224" class="l">dividerHeight</text><text x="1108.500" y="237" class="l">headerDividersEn...</text><text x="1108.500" y="249" class="l">footerDividersEn...</text>
<path d="M1108 120.500h152M1108 256h152" stroke="#dcdcdc" stroke-width=".7"/>
<g fill="#fff" stroke="#d6d6d6" stroke-width=".6">
<rect x="1170.500" y="77.500" width="90" height="11"/><rect x="1170.500" y="91.500" width="90" height="11"/><rect x="1170.500" y="105.500" width="90" height="11"/>
<rect x="1170.500" y="133.500" width="80" height="10.500"/><rect x="1170.500" y="147" width="80" height="10.500"/><rect x="1170.500" y="160.500" width="80" height="10.500"/><rect x="1170.500" y="174.500" width="80" height="10.500"/><rect x="1170.500" y="188.500" width="80" height="10.500"/><rect x="1170.500" y="202.500" width="80" height="10.500"/><rect x="1170.500" y="216.500" width="80" height="10.500"/>
</g>
<g fill="#c9c9c9"><rect x="1250.500" y="91.500" width="10" height="11"/><rect x="1250.500" y="105.500" width="10" height="11"/><rect x="1242" y="160.500" width="9" height="10.500"/></g>
<path d="M1254 96h3l-1.500 2zM1254 110h3l-1.500 2zM1245 165h3l-1.500 2z" fill="#fff"/>
<text x="1173" y="85.500" class="v">listViewID</text><text x="1173" y="99" class="v">match_parent</text><text x="1173" y="113" class="v">match_parent</text><text x="1173" y="141" class="v">@array/haiti</text>
<text x="1173" y="154.500" class="l">vertical</text><text x="1173" y="168" class="g">android:listViewStyle</text><text x="1173" y="182" class="g">rBackgroundCacheHint</text><text x="1173" y="210" class="g">?attr/listDivider</text>
<g fill="#bbb"><rect x="1254" y="138.500" width="3" height=".6"/><rect x="1254" y="152" width="3" height=".6"/><rect x="1254" y="165.500" width="3" height=".6"/><rect x="1254" y="179.500" width="3" height=".6"/><rect x="1254" y="193.500" width="3" height=".6"/><rect x="1254" y="207.500" width="3" height=".6"/><rect x="1254" y="221.500" width="3" height=".6"/></g>
<rect x="1174.500" y="231.500" width="6.500" height="6.500" rx="1" fill="#4a9be0"/><rect x="1175.800" y="234.300" width="4" height="1" fill="#fff"/>
<rect x="1174.500" y="243.500" width="6.500" height="6.500" rx="1" fill="#4a9be0"/><rect x="1175.800" y="246.300" width="4" height="1" fill="#fff"/>
<text x="1109.500" y="634.500" style="font-size:6.800px;fill:#4a55d0;text-decoration:underline">View all properties</text>
<path d="M1168 634l3-1h4M1175 631l-3 1h-4" fill="none" stroke="#4a90c0" stroke-width=".7"/>

<!-- right strip -->
<rect x="1265" y="49" width="15" height="629" fill="#ececec"/>
<circle cx="1270" cy="56.500" r="2.700" fill="#d9f2d4" stroke="#4aa04a" stroke-width=".7"/>
<text transform="translate(1268,62) rotate(90)" style="font-size:6px;fill:#555">Gradle</text>
<use href="#a" x="1266" y="602" width="8" height="8"/>
<text transform="translate(1268,611) rotate(90)" style="font-size:5.800px;fill:#555">Android Model</text>

<!-- bottom -->
<rect x="468" y="643" width="797" height="13" fill="#ededed"/>
<rect x="470" y="644" width="29" height="12" fill="#fff"/>
<rect x="499" y="644" width="27" height="12" fill="#dcdcdc"/>
<text x="478" y="651.500" style="font-size:6px;fill:#666">Design</text><text x="506.500" y="651.500" style="font-size:6px;fill:#777">Text</text>
<rect x="269" y="656" width="1011" height="12" fill="#efefef"/>
<rect x="269" y="655.600" width="1011" height=".7" fill="#dcdcdc"/>
<rect x="269" y="667.500" width="1011" height="10.500" fill="#f0f0f0"/>
<rect x="269" y="667.500" width="1011" height=".7" fill="#dddddd"/>
<rect x="269" y="677.500" width="1011" height=".8" fill="#bfbfbf"/>
<rect x="284" y="658" width="5" height="6" fill="#d9a34a" opacity=".8"/>
<text x="291" y="664" style="font-size:6px;fill:#555">TODO</text>
<use href="#a" x="319" y="658" width="7" height="7"/>
<text x="328" y="664" style="font-size:6px;fill:#555">6: Android Monitor</text>
<rect x="391" y="659" width="5" height="5.500" fill="#bbb" stroke="#888" stroke-width=".5"/>
<text x="399" y="664" style="font-size:6px;fill:#555">Terminal</text>
<rect x="271" y="669.500" width="7" height="7" fill="#c9c9c9" stroke="#aaa" stroke-width=".4"/>
<text x="284" y="675" style="font-size:6px;fill:#555">Run selected configuration</text>
<rect x="1165" y="659" width="4" height="4.500" fill="#aaa"/><text x="1173" y="664" style="font-size:6px;fill:#555">Event Log</text>
<rect x="1210.500" y="659" width="5" height="5.500" fill="#cfe3f0" stroke="#5a8fb8" stroke-width=".5"/><text x="1219" y="664" style="font-size:6px;fill:#555">Gradle Console</text>
<text x="1114" y="675" style="font-size:5.800px;fill:#666">1:13</text><text x="1135" y="675" style="font-size:5.800px;fill:#999">n/a</text><text x="1152" y="675" style="font-size:5.800px;fill:#999">n/a</text><text x="1166" y="675" style="font-size:5.800px;fill:#999">Context: &lt;no context&gt;</text>
<rect x="1243" y="671" width="3.500" height="3.500" fill="#777"/><rect x="1255" y="669.500" width="4.500" height="6.500" fill="#bbb"/><circle cx="1268.500" cy="672.500" r="2.500" fill="#bbb"/>

<!-- dialog -->
<rect x="474" y="256" width="323" height="240" fill="#000" opacity=".3" filter="url(#sh)"/>
<rect x="479" y="251" width="312.500" height="236.500" fill="#ececec"/>
<rect x="479" y="251" width="312.500" height="11" fill="#e4e4e4"/>
<circle cx="486" cy="256.500" r="2.800" fill="#f2564f"/><circle cx="496" cy="256.500" r="2.800" fill="#d4d4d4"/><circle cx="506" cy="256.500" r="2.800" fill="#3cbe4c"/>
<text x="634.500" y="259" text-anchor="middle" style="font-size:6.400px;fill:#8a8a8a">Select Deployment Target</text>
<rect x="485.500" y="267" width="299" height="185.500" fill="#fff"/>
<text x="485.500" y="276" style="font-size:6px;fill:#555">Connected Devices</text>
<rect x="543" y="273" width="240" height=".8" fill="#dfe2e6"/>
<rect x="485.500" y="280" width="299" height="10" fill="#3b72c4"/>
<rect x="488.500" y="281.500" width="3.500" height="7" fill="#6a5aa8"/>
<text x="496" y="287.500" style="font-size:6.400px;fill:#fff;font-weight:bold">Nexus 4 API 23 (Android 6.0, API 23)</text>
<text x="485.500" y="299.500" style="font-size:6px;fill:#555">Available Virtual Devices</text>
<rect x="559" y="297" width="224" height=".8" fill="#e8e8e8"/>
<rect x="488.500" y="305.500" width="3.500" height="7" fill="#777"/>
<text x="496" y="311" style="font-size:6.400px;fill:#555">Nexus 5 API 23 x86</text>
<rect x="491.500" y="454" width="88.500" height="9.500" rx="1" fill="#fff"/>
<text x="536" y="461" text-anchor="middle" style="font-size:6.300px;fill:#444">Create New Virtual Device</text>
<text x="714" y="461" style="font-size:6.500px;fill:#4a55c8;text-decoration:underline;letter-spacing:.1px">Don't see your device?</text>
<rect x="487" y="473" width="7" height="7" rx="1" fill="#fff" stroke="#d6d6d6" stroke-width=".5"/>
<text x="497" y="479" style="font-size:6.400px;fill:#666;letter-spacing:.12px">Use same selection for future launches</text>
<rect x="709" y="472" width="31" height="9.500" rx="1.500" fill="#fff"/>
<text x="724.500" y="479" text-anchor="middle" style="font-size:6.400px;fill:#444">Cancel</text>
<rect x="747" y="471" width="33" height="10.500" rx="1.500" fill="#3d9bee"/>
<text x="763.500" y="479" text-anchor="middle" style="font-size:6.400px;fill:#fff">OK</text>
<path d="M736.500 386v7.500l1.800-1.500 1.200 2.500 1-.5-1.200-2.400 2.200-.2z" fill="#222" stroke="#fff" stroke-width=".3"/>

<!-- dock -->
<rect x="342" y="680" width="596" height="40" fill="#ebebeb"/>
<rect x="342" y="680" width="596" height="1.200" fill="#c9c9c9"/>
<!-- finder -->
<rect x="347" y="686" width="26" height="26" rx="2" fill="url(#dockfinder)"/>
<path d="M361 686c-3 7-3 11-2 15h-3M352 695v3M366 695v3M351 704c5 3 12 3 18-1" fill="none" stroke="#1b3a66" stroke-width="1"/>
<!-- siri -->
<circle cx="394.500" cy="699" r="14" fill="url(#siri)"/><path d="M381 702c5-4 9 0 14 0s9-5 13 0c-3 6-8 9-13 9-6 0-11-3-14-9z" fill="#9fc4e8" opacity=".7"/>
<!-- launchpad -->
<circle cx="428.500" cy="699" r="14" fill="url(#gray)"/><path d="M437 689c-7 1-13 7-15 13l4 5c6-3 11-11 11-18zM420 702l-5 2 4-5zM426 708l-2 5 5-4z" fill="#333"/>
<!-- safari -->
<circle cx="462.500" cy="699" r="14" fill="url(#safari)" stroke="#d9d9d9" stroke-width="1"/><path d="M471 690l-11 7-6 10 11-7z" fill="#eee"/><path d="M471 690l-11 7 5 3z" fill="#e8413a"/>
<!-- itunes -->
<circle cx="496.500" cy="699" r="14" fill="#fff" stroke="#d45fb8" stroke-width="1.400"/><path d="M491 706a2.500 2.500 0 1 1 0-.5V693l10-2v12a2.500 2.500 0 1 1 0-.5V695l-8 1.700v9" fill="#d94aa0"/>
<!-- books -->
<circle cx="530.500" cy="699" r="14" fill="url(#orange)"/><path d="M520 692c4-1 8 0 10 2v13c-2-2-6-3-10-2zM541 692c-4-1-8 0-10 2v13c2-2 6-3 10-2z" fill="#fff"/>
<!-- inkscape -->
<path d="M564 684l13 14-6 1 3 4-5 1 1 6-5-3-3 3-2-4-6 2 3-6-6-3 1-2z" fill="#0b0b0b"/><path d="M564 684l5 6-3 2-2-2-2 3-3-3z" fill="#fff"/>
<!-- blender -->
<path d="M584 696l14-7 11 6c3 3 3 10-1 13-5 4-12 3-15-1-2-2-3-5-1-7l-7 1z" fill="#ea7600"/><circle cx="603" cy="700" r="6" fill="#fff"/><circle cx="603" cy="700" r="3.500" fill="#265787"/>
<!-- chrome -->
<circle cx="632.500" cy="699" r="14.500" fill="#e54335"/><path d="M632.500 699L645 706a14.500 14.500 0 0 1-25 0l-1-1z" fill="#4caf50"/><path d="M632.500 684.500a14.500 14.500 0 0 1 12.600 21.700L632 699z" fill="#fbc02d"/><path d="M632.500 691h13.300a14.500 14.500 0 0 0-13.300-6.500z" fill="#e54335"/><circle cx="632.500" cy="699" r="6.500" fill="#fff"/><circle cx="632.500" cy="699" r="5" fill="#4a8af4"/>
<!-- quicktime -->
<circle cx="666.500" cy="699" r="14" fill="#2b2b2b"/><circle cx="666.500" cy="699" r="8" fill="#4a86c8" stroke="#777" stroke-width="1.200"/><path d="M671 704l8 9h-5l-7-8z" fill="#222"/>
<!-- android studio -->
<circle cx="700.500" cy="699" r="14" fill="#7fb54a"/><path d="M700.500 690v6M696 712l4.500-14 4.500 14M694 706h13" stroke="#e8efe0" stroke-width="1.400" fill="none"/><circle cx="700.500" cy="692" r="3" fill="#39524a"/>
<!-- vscode -->
<path d="M743 684v31l-6-2-17-10-1-1v-7l1-1 17-10zM728 699l9 6v-12z" fill="#0e6cb8" fill-rule="evenodd"/><path d="M737 685l6-1v31l-6-2z" fill="#1b8be0"/>
<!-- x tool -->
<rect x="753" y="683" width="31" height="24" fill="#e8e8e8" stroke="#9a9a9a" stroke-width="1.200"/>
<path d="M754 698l28 16 3-3-28-17z" fill="#aaa"/>
<path d="M768 690l12 13M780 690l-12 13" stroke="#d8201e" stroke-width="2.500"/>
<!-- green -->
<rect x="788" y="688" width="29" height="23" rx="1" fill="#8cc152"/><rect x="796" y="692" width="12" height="20" rx="1.500" fill="#eee" stroke="#444" stroke-width="1.500"/>
<!-- downloads -->
<circle cx="836.500" cy="699" r="14" fill="#fff" stroke="#b898d8" stroke-width="1"/><path d="M836.500 691v15M831 701l5.500 5.500 5.500-5.500" fill="none" stroke="#8a5fc4" stroke-width="1.300"/>
<rect x="861" y="684" width=".8" height="30" fill="#d0d0d0"/>
<!-- piano -->
<rect x="872" y="684" width="27" height="8" fill="#7d5f48"/><rect x="872" y="692" width="27" height="16" fill="#b79a7a"/><rect x="872" y="707" width="27" height="4" fill="#222"/><rect x="872" y="691" width="27" height="2" fill="#333"/><circle cx="879" cy="701" r="1.400" fill="#eee"/><circle cx="885.500" cy="701" r="1.400" fill="#eee"/><circle cx="892" cy="701" r="1.400" fill="#eee"/>
<!-- trash -->
<path d="M909 690h20l-2.500 24h-15z" fill="#e2e2e2" stroke="#cfcfcf" stroke-width=".7"/><ellipse cx="919" cy="689" rx="10" ry="3" fill="#dcdcdc" stroke="#b8b8b8" stroke-width=".6"/><path d="M914 686l3 2 3-3 3 3 3-2" stroke="#777" stroke-width="1" fill="none"/>
<g fill="#555"><circle cx="360" cy="718" r=".6"/><circle cx="632" cy="718" r=".6"/><circle cx="666" cy="718" r=".6"/><circle cx="700" cy="718" r=".6"/><circle cx="768" cy="718" r=".6"/><circle cx="802" cy="718" r=".6"/><circle cx="836" cy="718" r=".6"/></g>
</svg>
</body></html>
